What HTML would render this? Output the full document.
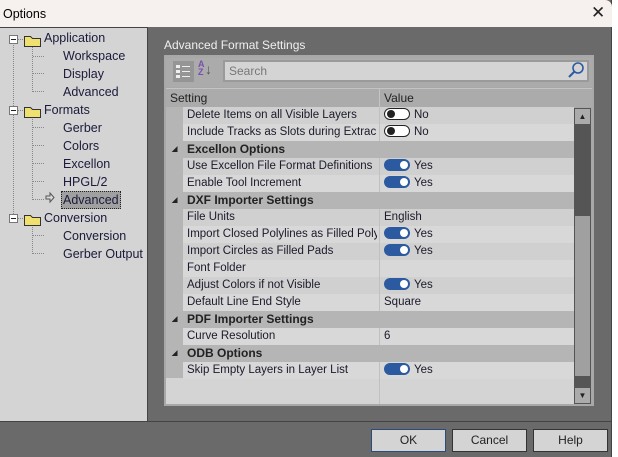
<!DOCTYPE html>
<html><head><style>
*{margin:0;padding:0;box-sizing:border-box}
body{width:618px;height:457px;overflow:hidden;background:#fff;font-family:"Liberation Sans",sans-serif;font-size:12px;color:#1a1a2a;position:relative}
.a{position:absolute}
.t{position:absolute;white-space:nowrap}
.row{position:absolute;left:183px;width:391px;height:17px;line-height:17px;font-size:11.5px}
.row .n{position:absolute;left:4px;width:190px;overflow:hidden;white-space:nowrap}
.row .v{position:absolute;left:196px;top:0;height:17px;border-left:1px solid #c0c0c0;width:195px;padding-left:4px;background:inherit;white-space:nowrap}
.cat{position:absolute;left:166px;width:408px;height:17px;line-height:17px;background:#b5b5b5;font-weight:bold;color:#222}
.tg{display:inline-block;vertical-align:middle;width:26px;height:12px;border-radius:6px;position:relative;margin-right:4px;margin-top:-2px}
.on{background:#2c5aa0}
.on::after{content:"";position:absolute;right:2px;top:2px;width:8px;height:8px;border-radius:50%;background:#fff}
.off{background:#fff;border:1px solid #222}
.off::after{content:"";position:absolute;left:2px;top:1.5px;width:8px;height:8px;border-radius:50%;background:#222}
.tree{font-size:12.5px;color:#1a1a3a}
.btn{position:absolute;top:429px;width:75px;height:23px;background:#d4d4d4;border:1px solid #333;text-align:center;line-height:21px;color:#222}
</style></head><body>
<div class="a" style="left:0;top:0;width:612px;height:457px;background:#6a6a6a;border-right:1px solid #444"></div>
<div class="a" style="left:0;top:0;width:612px;height:27px;background:#f6f0ee;border-radius:0 7px 0 0"></div>
<div class="t" style="left:3px;top:7px;font-size:12.5px;color:#000">Options</div>
<div class="t" style="left:591px;top:3px;font-size:17px;color:#222">✕</div>
<div class="a" style="left:0;top:27px;width:148px;height:395px;background:#d4d4d4;border:1px solid #444;border-left:none"></div>
<svg class="a" style="left:0;top:27px" width="148" height="250">
<g stroke="#888" stroke-dasharray="1,1" fill="none">
<line x1="13.5" y1="14" x2="13.5" y2="192"/>
<line x1="32.5" y1="20" x2="32.5" y2="65"/><line x1="33" y1="29.5" x2="44" y2="29.5"/><line x1="33" y1="46.5" x2="44" y2="46.5"/><line x1="33" y1="64.5" x2="44" y2="64.5"/>
<line x1="32.5" y1="92" x2="32.5" y2="173"/><line x1="33" y1="100.5" x2="44" y2="100.5"/><line x1="33" y1="118.5" x2="44" y2="118.5"/><line x1="33" y1="136.5" x2="44" y2="136.5"/><line x1="33" y1="154.5" x2="44" y2="154.5"/><line x1="33" y1="172.5" x2="44" y2="172.5"/>
<line x1="32.5" y1="200" x2="32.5" y2="227"/><line x1="33" y1="208.5" x2="44" y2="208.5"/><line x1="33" y1="226.5" x2="44" y2="226.5"/>
<line x1="18" y1="12.5" x2="24" y2="12.5"/><line x1="18" y1="83.5" x2="24" y2="83.5"/><line x1="18" y1="191.5" x2="24" y2="191.5"/>
</g>
<g fill="#fff" stroke="#777"><rect x="9.5" y="8.5" width="8" height="8"/><rect x="9.5" y="79.5" width="8" height="8"/><rect x="9.5" y="187.5" width="8" height="8"/></g>
<g stroke="#222"><line x1="11" y1="12.5" x2="16" y2="12.5"/><line x1="11" y1="83.5" x2="16" y2="83.5"/><line x1="11" y1="191.5" x2="16" y2="191.5"/></g>
<g fill="#f0e070" stroke="#333"><path d="M24.5 9.5h6l2 2h8v8h-16z"/><path d="M24.5 80.5h6l2 2h8v8h-16z"/><path d="M24.5 188.5h6l2 2h8v8h-16z"/></g>
<path d="M46 169h4v-3l4 4.5-4 4.5v-3h-4z" fill="#ddd" stroke="#555"/>
</svg>
<div class="tree">
<div class="t" style="left:44px;top:31px">Application</div>
<div class="t" style="left:63px;top:49px">Workspace</div>
<div class="t" style="left:63px;top:67px">Display</div>
<div class="t" style="left:63px;top:85px">Advanced</div>
<div class="t" style="left:44px;top:103px">Formats</div>
<div class="t" style="left:63px;top:121px">Gerber</div>
<div class="t" style="left:63px;top:139px">Colors</div>
<div class="t" style="left:63px;top:157px">Excellon</div>
<div class="t" style="left:63px;top:175px">HPGL/2</div>
<div class="t" style="left:61px;top:191px;background:#a0a0a0;border:1px dotted #222;padding:1px 1px;line-height:14px">Advanced</div>
<div class="t" style="left:44px;top:211px">Conversion</div>
<div class="t" style="left:63px;top:229px">Conversion</div>
<div class="t" style="left:63px;top:247px">Gerber Output</div>
</div>
<div class="t" style="left:164px;top:38px;color:#f0f0f0;font-size:12px">Advanced Format Settings</div>
<div class="a" style="left:164px;top:55px;width:430px;height:351px;background:#a8a8a8"></div>
<div class="a" style="left:166px;top:58px;width:426px;height:29px;background:#ababab"></div>
<div class="a" style="left:173px;top:61px;width:21px;height:21px;background:#959595"></div>
<svg class="a" style="left:175px;top:63px" width="18" height="17"><g fill="#eee"><rect x="1" y="2" width="4" height="3"/><rect x="1" y="7" width="4" height="3"/><rect x="1" y="12" width="4" height="3"/><rect x="7" y="3" width="8" height="1"/><rect x="7" y="8" width="8" height="1"/><rect x="7" y="13" width="8" height="1"/></g></svg>
<div class="t" style="left:198px;top:60px;font-size:9px;line-height:8px;color:#7a4fb0;font-weight:bold">A<br>Z</div>
<div class="t" style="left:205px;top:61px;font-size:14px;color:#555">↓</div>
<div class="a" style="left:223px;top:60px;width:366px;height:22px;background:#d4d4d4;border:2px solid #9a9a9a"></div>
<div class="t" style="left:229px;top:64px;color:#777">Search</div>
<svg class="a" style="left:567px;top:61px" width="18" height="18"><circle cx="11" cy="7" r="5" fill="none" stroke="#2c5aa0" stroke-width="1.6"/><line x1="7" y1="11" x2="2" y2="16" stroke="#2c5aa0" stroke-width="2"/></svg>
<div class="a" style="left:166px;top:88px;width:426px;height:19px;background:#ababab;border-top:1px solid #c4c4c4"></div>
<div class="t" style="left:170px;top:91px;color:#222">Setting</div>
<div class="a" style="left:379px;top:88px;width:1px;height:19px;background:#c4c4c4"></div>
<div class="t" style="left:384px;top:91px;color:#222">Value</div>
<div class="a" style="left:166px;top:107px;width:408px;height:297px;background:#d4d4d4"></div>
<div class="a" style="left:166px;top:107px;width:17px;height:271px;background:#b5b5b5"></div>
<div class="a" style="left:379px;top:107px;width:1px;height:297px;background:#c0c0c0"></div>

<div class="row" style="top:107px;background:#d0d0d0"><span class="n">Delete Items on all Visible Layers</span><span class="v"><i class="tg off"></i>No</span></div>
<div class="row" style="top:124px;background:#d8d8d8"><span class="n">Include Tracks as Slots during Extrac...</span><span class="v"><i class="tg off"></i>No</span></div>
<div class="cat" style="top:141px"><span style="position:absolute;left:6px;font-size:7px">◢</span><span style="position:absolute;left:21px">Excellon Options</span></div>
<div class="row" style="top:158px;background:#d0d0d0"><span class="n">Use Excellon File Format Definitions</span><span class="v"><i class="tg on"></i>Yes</span></div>
<div class="row" style="top:175px;background:#d8d8d8"><span class="n">Enable Tool Increment</span><span class="v"><i class="tg on"></i>Yes</span></div>
<div class="cat" style="top:192px"><span style="position:absolute;left:6px;font-size:7px">◢</span><span style="position:absolute;left:21px">DXF Importer Settings</span></div>
<div class="row" style="top:209px;background:#d0d0d0"><span class="n">File Units</span><span class="v">English</span></div>
<div class="row" style="top:226px;background:#d8d8d8"><span class="n">Import Closed Polylines as Filled Polyg...</span><span class="v"><i class="tg on"></i>Yes</span></div>
<div class="row" style="top:243px;background:#d0d0d0"><span class="n">Import Circles as Filled Pads</span><span class="v"><i class="tg on"></i>Yes</span></div>
<div class="row" style="top:260px;background:#d8d8d8"><span class="n">Font Folder</span><span class="v"></span></div>
<div class="row" style="top:277px;background:#d0d0d0"><span class="n">Adjust Colors if not Visible</span><span class="v"><i class="tg on"></i>Yes</span></div>
<div class="row" style="top:294px;background:#d8d8d8"><span class="n">Default Line End Style</span><span class="v">Square</span></div>
<div class="cat" style="top:311px"><span style="position:absolute;left:6px;font-size:7px">◢</span><span style="position:absolute;left:21px">PDF Importer Settings</span></div>
<div class="row" style="top:328px;background:#d8d8d8"><span class="n">Curve Resolution</span><span class="v">6</span></div>
<div class="cat" style="top:345px"><span style="position:absolute;left:6px;font-size:7px">◢</span><span style="position:absolute;left:21px">ODB Options</span></div>
<div class="row" style="top:362px;background:#d8d8d8"><span class="n">Skip Empty Layers in Layer List</span><span class="v"><i class="tg on"></i>Yes</span></div>
<div class="a" style="left:574px;top:108px;width:17px;height:296px;background:#555"></div>
<div class="a" style="left:575px;top:109px;width:15px;height:15px;background:#ababab;font-size:8px;text-align:center;line-height:15px;color:#222">▲</div>
<div class="a" style="left:575px;top:216px;width:15px;height:160px;background:#a0a0a0"></div>
<div class="a" style="left:575px;top:388px;width:15px;height:15px;background:#ababab;font-size:8px;text-align:center;line-height:15px;color:#222">▼</div>
<div class="a" style="left:148px;top:421px;width:464px;height:1px;background:#444"></div>
<div class="btn" style="left:371px;border-color:#2c4a80">OK</div>
<div class="btn" style="left:452px">Cancel</div>
<div class="btn" style="left:533px">Help</div>
</body></html>
